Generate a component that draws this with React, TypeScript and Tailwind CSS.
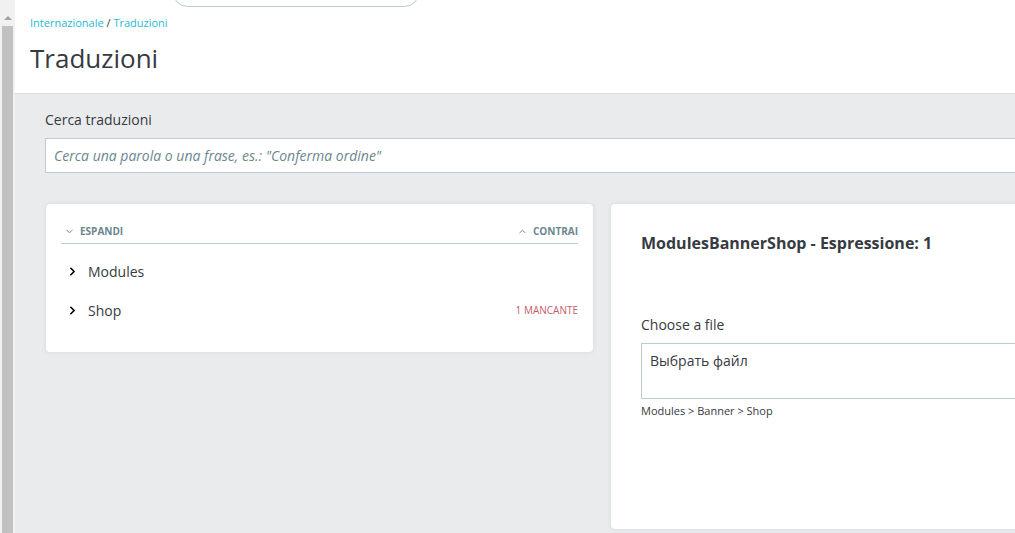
import { ChevronDown, ChevronUp, ChevronRight } from "lucide-react";

const font = { fontFamily: '"Open Sans", "Noto Sans", sans-serif' };

function Scrollbar() {
  return (
    <div className="flex w-[15px] shrink-0 flex-col items-center bg-[#f1f1f1]">
      <div className="mt-[16px] h-0 w-0 border-x-[4px] border-b-[4px] border-x-transparent border-b-[#a3a3a3]" />
      <div className="mt-[6px] w-[11px] flex-1 bg-[#c1c1c1]" />
    </div>
  );
}

function TreePanel() {
  return (
    <div className="h-[150px] w-[549px] shrink-0 rounded-[5px] border border-[#dbe6e9] bg-white px-[15px] pt-[15px] shadow-[0_0_4px_0_rgba(0,0,0,0.06)]">
      <div className="flex h-[25px] items-center justify-between border-b border-[#bbcdd2] text-[10px] font-bold uppercase text-[#6c868e]">
        <span className="flex items-center gap-[5px] pl-[3px]">
          <ChevronDown size={11} strokeWidth={2} />
          Espandi
        </span>
        <span className="flex items-center gap-[5px]">
          <ChevronUp size={11} strokeWidth={2} />
          Contrai
        </span>
      </div>
      <ul className="mt-[8px] text-[14px] text-[#363a41]">
        <li className="flex h-[39px] items-center">
          <ChevronRight size={13} strokeWidth={3} className="ml-[5px] text-black" />
          <span className="ml-[9px]">Modules</span>
        </li>
        <li className="flex h-[39px] items-center">
          <ChevronRight size={13} strokeWidth={3} className="ml-[5px] text-black" />
          <span className="ml-[9px]">Shop</span>
          <span className="ml-auto text-[10px] uppercase text-[#c45c6a]">1 mancante</span>
        </li>
      </ul>
    </div>
  );
}

function EditorPanel() {
  return (
    <div className="h-[327px] flex-1 rounded-[5px] border border-[#dbe6e9] bg-white px-[30px] pt-[28px] shadow-[0_0_4px_0_rgba(0,0,0,0.06)]">
      <h3 className="text-[16px] font-bold leading-[22px] text-[#363a41]">
        ModulesBannerShop - Espressione: 1
      </h3>
      <label className="mt-[61px] block text-[14px] leading-[20px] text-[#363a41]">
        Choose a file
      </label>
      <div className="mt-[8px] h-[56px] border border-[#bbcdd2] px-[8px] py-[7px] text-[14px] leading-[20px] text-[#363a41]">
        Выбрать файл
      </div>
      <p className="mt-[4px] text-[11px] leading-[16px] text-[#363a41]">
        Modules &gt; Banner &gt; Shop
      </p>
    </div>
  );
}

export default function App() {
  return (
    <div className="flex h-[533px] w-[1015px] overflow-hidden bg-[#eaebec]" style={font}>
      <Scrollbar />
      <div className="w-[1200px] shrink-0">
        <header className="flex h-[94px] flex-col border-b border-[#dddddd] bg-white pl-[15px]">
          <div className="-mt-[25px] ml-[142px] h-[32px] w-[248px] shrink-0 rounded-[16px] border border-[#bbcdd2]" />
          <nav className="mt-[9px] text-[11px] leading-[14px] text-[#363a41]">
            <span className="text-[#25b9d7]">Internazionale</span> /{" "}
            <span className="text-[#25b9d7]">Traduzioni</span>
          </nav>
          <h1 className="mt-[11px] text-[26px] leading-[34px] text-[#363a41]">Traduzioni</h1>
        </header>

        <main className="px-[30px] pt-[16px]">
          <label className="block text-[14px] leading-[20px] text-[#363a41]">Cerca traduzioni</label>
          <input
            className="mt-[8px] h-[35px] w-full border border-[#bbcdd2] bg-white px-[8px] text-[14px] text-[#363a41] placeholder:italic placeholder:text-[#6c868e] outline-none"
            placeholder={'Cerca una parola o una frase, es.: "Conferma ordine"'}
          />
          <div className="mt-[30px] flex items-start gap-[16px]">
            <TreePanel />
            <EditorPanel />
          </div>
        </main>
      </div>
    </div>
  );
}
